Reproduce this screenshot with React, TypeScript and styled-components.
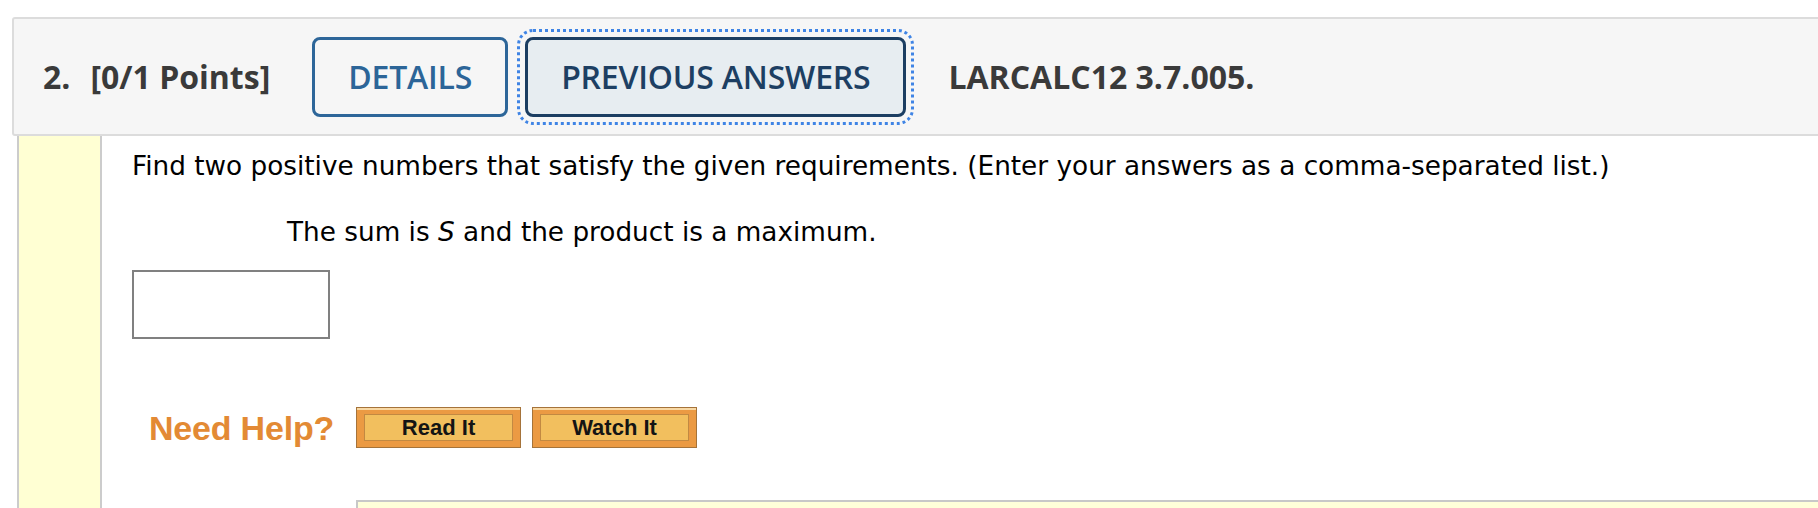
import React from 'react';
import styled, { createGlobalStyle } from 'styled-components';

const GlobalStyle = createGlobalStyle`
  html, body {
    margin: 0;
    padding: 0;
    background: #ffffff;
    overflow: hidden;
  }
  body {
    font-family: "DejaVu Sans", Verdana, sans-serif;
  }
`;

const Page = styled.div`
  width: 1860px;
  padding: 17px 0 0 12px;
`;

const QuestionHeader = styled.header`
  display: flex;
  align-items: center;
  height: 115px;
  padding-left: 29px;
  background: #f6f6f6;
  border: 2px solid #dcdcdc;
  border-radius: 3px;
  font-family: "Open Sans", "Liberation Sans", sans-serif;
  font-size: 32px;
`;

const PointsLabel = styled.div`
  display: flex;
  font-weight: 700;
  color: #3a3a3a;
  white-space: nowrap;
`;

const Number = styled.span`
  margin-right: 20px;
`;

const TabButton = styled.button<{ $active?: boolean }>`
  height: 80px;
  margin-left: ${(p) => (p.$active ? '17px' : '42px')};
  padding: 0 33px;
  font-family: inherit;
  font-size: 32px;
  font-weight: 600;
  letter-spacing: -0.2px;
  color: ${(p) => (p.$active ? '#1d3f63' : '#2c6598')};
  background: ${(p) => (p.$active ? '#e7edf1' : 'transparent')};
  border: 3px solid ${(p) => (p.$active ? '#1c3e62' : '#2d6699')};
  border-radius: 8px;
  outline: ${(p) => (p.$active ? '3px dotted #3f84e5' : 'none')};
  outline-offset: 5px;
  cursor: pointer;
`;

const ProblemCode = styled.div`
  margin-left: 42px;
  font-weight: 700;
  color: #3a3a3a;
  white-space: nowrap;
`;

const Body = styled.section`
  display: flex;
  margin-left: 5px;
  height: 380px;
`;

const Margin = styled.aside`
  flex: 0 0 81px;
  background: #ffffd3;
  border-left: 2px solid #cccccc;
  border-right: 2px solid #cccccc;
`;

const Content = styled.div`
  flex: 1;
  padding: 15px 0 0 30px;
  font-size: 26.3px;
  line-height: 30px;
  color: #000000;
`;

const Prompt = styled.p<{ $indent?: number }>`
  margin: ${(p) => (p.$indent ? '36px' : '0')} 0 0 ${(p) => p.$indent ?? 0}px;
  white-space: nowrap;
`;

const AnswerInput = styled.input`
  display: block;
  box-sizing: border-box;
  width: 198px;
  height: 69px;
  margin-top: 23px;
  border: 2px solid #808080;
  background: #ffffff;
`;

const HelpRow = styled.div`
  display: flex;
  align-items: center;
  height: 41px;
  margin-top: 68px;
`;

const HelpTitle = styled.span`
  margin: 0 22px 0 17px;
  font-family: "Liberation Sans", Arial, sans-serif;
  font-size: 34px;
  font-weight: 700;
  line-height: 1;
  letter-spacing: -0.2px;
  color: #e38a34;
`;

const HelpButton = styled.button`
  display: flex;
  box-sizing: border-box;
  width: 165px;
  height: 41px;
  margin-right: 11px;
  padding: 6px 7px;
  background: #eb9a43;
  border: 1px solid #a5733a;
  box-shadow: inset 0 2px 0 #f8d8a4;
  cursor: pointer;
`;

const HelpFace = styled.span`
  flex: 1;
  display: flex;
  align-items: center;
  justify-content: center;
  background: #f2bf5e;
  border: 1px solid #c28942;
  font-family: "Liberation Sans", Arial, sans-serif;
  font-size: 22px;
  font-weight: 700;
  color: #141414;
`;

const SolutionBox = styled.div`
  height: 60px;
  margin: 52px 0 0 224px;
  background: #ffffd9;
  border-top: 2px solid #c8c8c8;
  border-left: 2px solid #c8c8c8;
`;

export default function App() {
  return (
    <>
      <GlobalStyle />
      <Page>
        <QuestionHeader>
          <PointsLabel>
            <Number>2.</Number>
            <span>[0/1 Points]</span>
          </PointsLabel>
          <TabButton>DETAILS</TabButton>
          <TabButton $active>PREVIOUS ANSWERS</TabButton>
          <ProblemCode>LARCALC12 3.7.005.</ProblemCode>
        </QuestionHeader>
        <Body>
          <Margin />
          <Content>
            <Prompt>
              Find two positive numbers that satisfy the given requirements. (Enter your answers as a
              comma-separated list.)
            </Prompt>
            <Prompt $indent={155}>
              The sum is <i>S</i> and the product is a maximum.
            </Prompt>
            <AnswerInput type="text" />
            <HelpRow>
              <HelpTitle>Need Help?</HelpTitle>
              <HelpButton>
                <HelpFace>Read It</HelpFace>
              </HelpButton>
              <HelpButton>
                <HelpFace>Watch It</HelpFace>
              </HelpButton>
            </HelpRow>
            <SolutionBox />
          </Content>
        </Body>
      </Page>
    </>
  );
}
